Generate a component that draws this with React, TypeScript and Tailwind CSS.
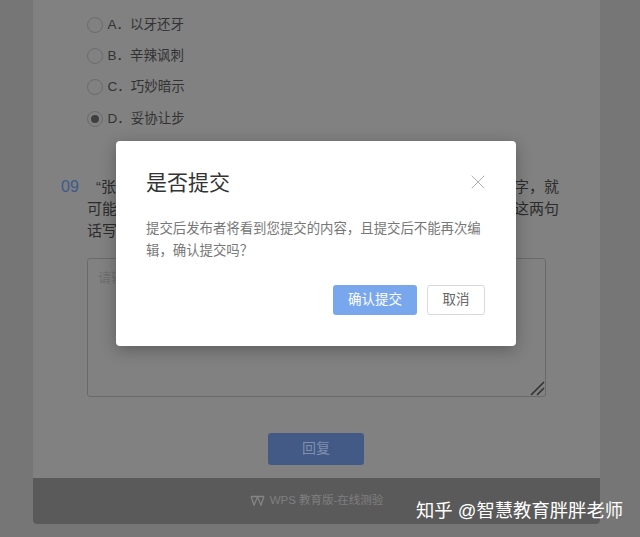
import React from 'react';
import { X } from 'lucide-react';

const FONT = "font-['Liberation_Sans','Noto_Sans_CJK_SC',sans-serif]";

const OPTIONS = [
  { key: 'A', label: '以牙还牙', checked: false },
  { key: 'B', label: '辛辣讽刺', checked: false },
  { key: 'C', label: '巧妙暗示', checked: false },
  { key: 'D', label: '妥协让步', checked: true },
];

const LINES = [
  ['“张', '字，就'],
  ['可能', '这两句'],
  ['话写', ''],
];

const Radio = ({ checked }: { checked: boolean }) => (
  <span className="flex h-4 w-4 items-center justify-center rounded-full border border-[#6b6b6b]">
    {checked && <span className="h-2 w-2 rounded-full bg-[#3f3f3f]" />}
  </span>
);

export default function App() {
  return (
    <div className={`${FONT} relative h-[537px] w-[640px] overflow-hidden bg-[#767676]`}>
      <div className="ml-[33px] flex h-[524px] w-[567px] flex-col rounded-b bg-[#818181]">
        <div className="flex-1 pl-[54px] pt-[9px]">
          <div className="flex flex-col">
            {OPTIONS.map(o => (
              <div key={o.key} className="flex h-[31.4px] items-center gap-[4.5px] text-[13.5px] text-[#333333]">
                <Radio checked={o.checked} />
                <span>{o.key}．{o.label}</span>
              </div>
            ))}
          </div>

          <div className="relative mt-[41px] w-[472px] text-[15px] leading-[22px] text-[#2c2c2c]">
            <span className="absolute -left-[26px] top-0 text-[16px] text-[#3f5a8c]">09</span>
            {LINES.map((line, i) => (
              <div key={i} className={`flex justify-between ${i === 0 ? 'pl-[9px]' : ''}`}>
                <span>{line[0]}</span>
                <span>{line[1]}</span>
              </div>
            ))}
          </div>

          <div className="relative mt-[16px] h-[139px] w-[459px] rounded-[3px] border border-[#6a6a6a] px-[10px] pt-[12px] text-[13px] leading-none text-[#6e6e6e]">
            请输
            <svg className="absolute bottom-0 right-0" width="16" height="16" viewBox="0 0 16 16" fill="none" stroke="#333333" strokeWidth="1.6">
              <path d="M2 15 15 2M8 15l7-7" />
            </svg>
          </div>

          <button className="ml-[181px] mt-[36px] block h-[32px] w-[96px] rounded-[3px] bg-[#425a85] text-[14px] text-[#7f8fae]">
            回复
          </button>
        </div>

        <div className="flex h-[46px] items-center justify-center gap-[5px] rounded-b bg-[#5a5a5a] pb-[1px] text-[11.5px] text-[#7f7f7f]">
          <svg width="15" height="11" viewBox="0 0 15 11" fill="none" stroke="#858585" strokeWidth="1.3">
            <path d="M1 1.5 4 10l3.5-8L11 10l3-8.5M1 1.5h13" />
          </svg>
          <span>WPS 教育版-在线测验</span>
        </div>
      </div>

      {/* dialog */}
      <div className="absolute left-[116px] top-[141px] h-[205px] w-[400px] rounded bg-white pl-[30px] pr-[31px] pt-[25px] shadow-[0_4px_16px_rgba(0,0,0,0.28)]">
        <div className="flex items-center justify-between">
          <h2 className="text-[21px] leading-[34px] text-[#333333]">是否提交</h2>
          <X className="-mr-[5px] h-6 w-6 -translate-y-px text-[#b0b0b0]" strokeWidth={1} />
        </div>
        <p className="mt-[18px] text-[13.4px] leading-[22px] text-[#777777]">
          提交后发布者将看到您提交的内容，且提交后不能再次编辑，确认提交吗？
        </p>
        <div className="mt-[23px] flex justify-end gap-[10px]">
          <button className="h-[30px] w-[84px] rounded-[3px] bg-[#79a7ee] text-[13.5px] text-white">确认提交</button>
          <button className="h-[30px] w-[58px] rounded-[3px] border border-[#d9d9d9] bg-white text-[13.5px] text-[#666666]">取消</button>
        </div>
      </div>

      {/* watermark */}
      <div className="absolute left-[416px] top-[498px] whitespace-nowrap text-[18.35px] leading-[26px] text-white">
        知乎 @智慧教育胖胖老师
      </div>
    </div>
  );
}
